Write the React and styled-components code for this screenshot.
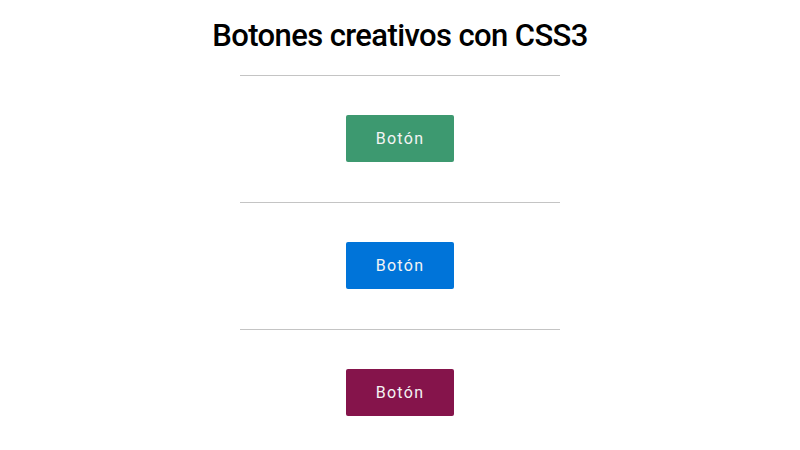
import React from 'react'
import styled, { createGlobalStyle } from 'styled-components'

const GlobalStyle = createGlobalStyle`
  * {
    box-sizing: border-box;
  }

  body {
    margin: 0;
    background: #fff;
    font-family: Roboto, "Liberation Sans", sans-serif;
  }
`

const buttons = [
  { id: 1, color: '#3d9970' },
  { id: 2, color: '#0074d9' },
  { id: 3, color: '#85144b' },
]

function App() {
  return (
    <>
      <GlobalStyle />
      <Page>
        <Title>Botones creativos con CSS3</Title>
        {buttons.map((b) => (
          <Section key={b.id}>
            <Divider />
            <Button $bg={b.color}>Botón</Button>
          </Section>
        ))}
      </Page>
    </>
  )
}

export default App

const Page = styled.main`
  display: flex;
  flex-direction: column;
  align-items: center;
  padding-top: 17px;
`

const Title = styled.h1`
  margin: 0 0 20px;
  font-size: 31px;
  font-weight: 500;
  line-height: 38px;
  letter-spacing: -0.6px;
  color: #000;
`

const Section = styled.section`
  width: 100%;
  display: flex;
  flex-direction: column;
  align-items: center;
  gap: 39px;
  padding-bottom: 40px;
`

const Divider = styled.hr`
  width: 40%;
  margin: 0;
  border: none;
  border-top: 1px solid #c4c4c4;
`

const Button = styled.button`
  width: 108px;
  height: 47px;
  border: none;
  border-radius: 2px;
  background: ${(p) => p.$bg};
  color: #f4f4f4;
  font-family: Roboto, "Liberation Sans", sans-serif;
  font-size: 16px;
  letter-spacing: 1.3px;
  cursor: pointer;
`
